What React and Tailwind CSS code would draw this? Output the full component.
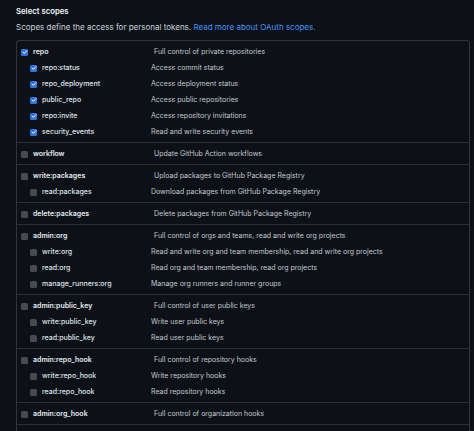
import React from "react";

const groups = [
  {
    name: "repo",
    desc: "Full control of private repositories",
    checked: true,
    children: [
      ["repo:status", "Access commit status"],
      ["repo_deployment", "Access deployment status"],
      ["public_repo", "Access public repositories"],
      ["repo:invite", "Access repository invitations"],
      ["security_events", "Read and write security events"],
    ],
  },
  { name: "workflow", desc: "Update GitHub Action workflows", children: [] },
  {
    name: "write:packages",
    desc: "Upload packages to GitHub Package Registry",
    children: [["read:packages", "Download packages from GitHub Package Registry"]],
  },
  { name: "delete:packages", desc: "Delete packages from GitHub Package Registry", children: [] },
  {
    name: "admin:org",
    desc: "Full control of orgs and teams, read and write org projects",
    children: [
      ["write:org", "Read and write org and team membership, read and write org projects"],
      ["read:org", "Read org and team membership, read org projects"],
      ["manage_runners:org", "Manage org runners and runner groups"],
    ],
  },
  {
    name: "admin:public_key",
    desc: "Full control of user public keys",
    children: [
      ["write:public_key", "Write user public keys"],
      ["read:public_key", "Read user public keys"],
    ],
  },
  {
    name: "admin:repo_hook",
    desc: "Full control of repository hooks",
    children: [
      ["write:repo_hook", "Write repository hooks"],
      ["read:repo_hook", "Read repository hooks"],
    ],
  },
  { name: "admin:org_hook", desc: "Full control of organization hooks", children: [] },
];

function Box({ checked }) {
  if (checked) {
    return (
      <span className="flex h-[7px] w-[7px] shrink-0 items-center justify-center rounded-[1.5px] bg-[#2f74de]">
        <svg viewBox="0 0 8 8" className="h-[6px] w-[6px]">
          <path d="M1.5 4.2 3.2 5.8 6.5 2.2" fill="none" stroke="#fff" strokeWidth="1.3" strokeLinecap="round" strokeLinejoin="round" />
        </svg>
      </span>
    );
  }
  return <span className="h-[7px] w-[7px] shrink-0 rounded-[1.5px] bg-[#464b52]" />;
}

export default function App() {
  return (
    <div className="h-screen overflow-hidden bg-[#0d1117] pl-4 pr-1 pt-[4px] font-['Inter',sans-serif] text-[#e6edf3]">
      <h3 className="text-[7.75px] font-semibold leading-[14px] text-[#f0f6fc]">Select scopes</h3>
      <p className="mt-[2px] text-[8px] leading-[14px] text-[#c9d1d9]">
        Scopes define the access for personal tokens.{" "}
        <a className="text-[#4493f8]">Read more about OAuth scopes.</a>
      </p>

      <div className="mt-[6px] rounded-t-[4px] border border-b-0 border-[#30363d]">
        {groups.map((g) => (
          <div key={g.name} className="border-b border-[#2a3037] pt-[3px] pb-[2px]">
            <div className="flex h-4 items-center pl-[4px] text-[7px]">
              <Box checked={g.checked} />
              <span className="ml-[5px] w-[121px] shrink-0 font-semibold text-[#e6edf3]">{g.name}</span>
              <span className="truncate text-[#c2c9d1]">{g.desc}</span>
            </div>
            {g.children.map(([n, d]) => (
              <div key={n} className="flex h-4 items-center pl-[13px] text-[7px]">
                <Box checked={g.checked} />
                <span className="ml-[5px] w-[109px] shrink-0 font-medium text-[#dfe5eb]">{n}</span>
                <span className="truncate text-[#c2c9d1]">{d}</span>
              </div>
            ))}
          </div>
        ))}
        <div className="h-6" />
      </div>
    </div>
  );
}
